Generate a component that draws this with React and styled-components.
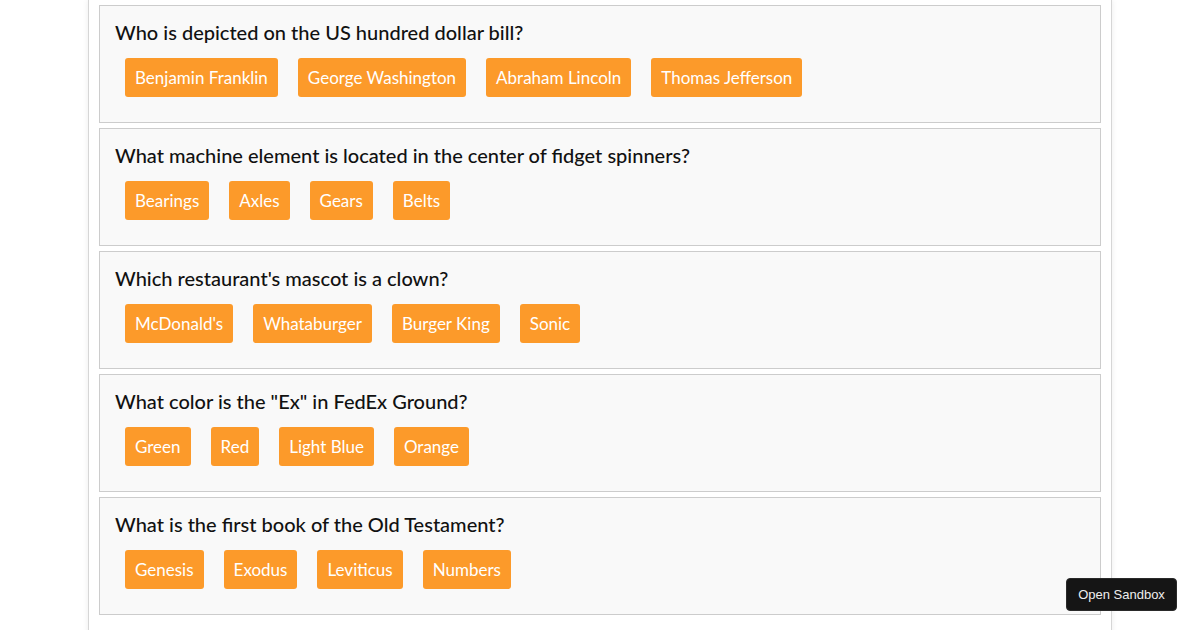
import React from 'react'
import { styled, createGlobalStyle } from 'styled-components'

const questions = [
    {
        title: 'Who is depicted on the US hundred dollar bill?',
        answers: ['Benjamin Franklin', 'George Washington', 'Abraham Lincoln', 'Thomas Jefferson'],
    },
    {
        title: 'What machine element is located in the center of fidget spinners?',
        answers: ['Bearings', 'Axles', 'Gears', 'Belts'],
    },
    {
        title: "Which restaurant's mascot is a clown?",
        answers: ["McDonald's", 'Whataburger', 'Burger King', 'Sonic'],
    },
    {
        title: 'What color is the "Ex" in FedEx Ground?',
        answers: ['Green', 'Red', 'Light Blue', 'Orange'],
    },
    {
        title: 'What is the first book of the Old Testament?',
        answers: ['Genesis', 'Exodus', 'Leviticus', 'Numbers'],
    },
]

const GlobalStyle = createGlobalStyle`
    body {
        margin: 0;
        background: #fff;
        font-family: Lato, "Open Sans", sans-serif;
        color: #111;
    }
    * {
        box-sizing: border-box;
    }
`

const App = () => {
    return (
        <>
            <GlobalStyle />
            <Quiz>
                {questions.map((q) => (
                    <QuestionCard key={q.title}>
                        <Question>{q.title}</Question>
                        <Answers>
                            {q.answers.map((a) => (
                                <AnswerButton key={a}>{a}</AnswerButton>
                            ))}
                        </Answers>
                    </QuestionCard>
                ))}
            </Quiz>
            <SandboxButton>Open Sandbox</SandboxButton>
        </>
    )
}

const Quiz = styled.div`
    max-width: 1024px;
    margin: 0 auto;
    min-height: 700px;
    border: 1px solid #d6d6d6;
    border-top: none;
    box-shadow: 0 0 6px rgba(0, 0, 0, 0.08);
    padding: 5px 10px;
    display: flex;
    flex-direction: column;
    gap: 5px;
    background: #fff;
`

const QuestionCard = styled.div`
    background: #f9f9f9;
    border: 1px solid #ccc;
    padding: 14px 15px 15px;
`

const Question = styled.h3`
    margin: 0 0 14px;
    font-size: 20px;
    line-height: 24px;
    font-weight: 500;
    color: #111;
`

const Answers = styled.div`
    display: flex;
    gap: 20px;
    padding: 0 10px 10px;
`

const AnswerButton = styled.button`
    background: #fc9a2a;
    color: #fff;
    border: none;
    border-radius: 3px;
    padding: 10px;
    height: 39px;
    font-family: Lato, "Open Sans", sans-serif;
    font-size: 17px;
    line-height: 19px;
    cursor: pointer;
`

const SandboxButton = styled.button`
    position: fixed;
    right: 23px;
    bottom: 19px;
    width: 111px;
    height: 33px;
    background: #151515;
    color: #eee;
    border: 1px solid #2a2a2a;
    border-radius: 4px;
    font-family: "Liberation Sans", Arial, sans-serif;
    font-size: 13px;
`

export default App
